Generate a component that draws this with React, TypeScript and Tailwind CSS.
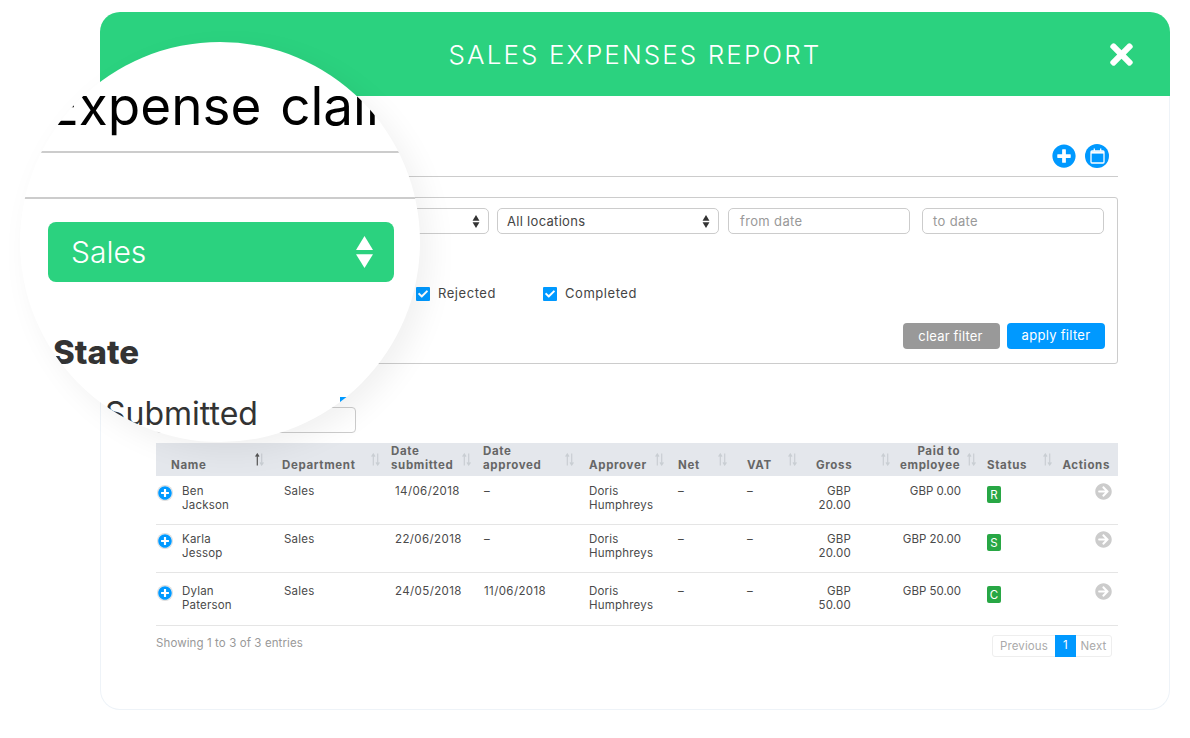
import React from "react";
import { FaTimes, FaPlusCircle, FaArrowCircleRight, FaCheck } from "react-icons/fa";

const font = "font-['Inter','Noto_Sans',sans-serif]";
const cols = "grid grid-cols-[120px_109px_92px_106px_89px_69px_69px_90px_81px_77px_60px]";

function Sort({ active }: { active?: boolean }) {
  return (
    <svg width="9" height="13" viewBox="0 0 9 13" className="shrink-0 mb-[6px]" fill="none" strokeWidth="1.2">
      <path d="M2.3 12.5V1.5M0.6 3.6L2.3 1 4 3.6" stroke={active ? "#555" : "#c9ced3"} />
      <path d="M6.7 0.5V11.5M5 9.4L6.7 12 8.4 9.4" stroke="#c9ced3" />
    </svg>
  );
}

function Updown({ w, h, color }: { w: number; h: number; color: string }) {
  return (
    <svg width={w} height={h} viewBox="0 0 16 30" fill={color} className="shrink-0">
      <path d="M8 0L16 13H0Z" />
      <path d="M8 30L0 17H16Z" />
    </svg>
  );
}

function Check({ label }: { label: string }) {
  return (
    <div className="w-[127px] flex items-center gap-[8px] h-[14px]">
      <span className="w-[14px] h-[14px] rounded-[1px] bg-[#0099ff] flex items-center justify-center text-white">
        <FaCheck size={10} />
      </span>
      <span className="text-[13px] text-[#444] tracking-[0.55px]">{label}</span>
    </div>
  );
}

const heads: { t: React.ReactNode; cls: string; sort?: boolean; active?: boolean; right?: boolean }[] = [
  { t: "Name", cls: "pl-[15px] pr-[12px]", sort: true, active: true },
  { t: "Department", cls: "pl-[6px] pr-[5px]", sort: true },
  { t: <>Date<br />submitted</>, cls: "pl-[6px] pr-[6px]", sort: true },
  { t: <>Date<br />approved</>, cls: "pl-[6px] pr-[9px]", sort: true },
  { t: "Approver", cls: "pl-[6px] pr-[8px]", sort: true },
  { t: "Net", cls: "pl-[6px] pr-[14px]", sort: true },
  { t: "VAT", cls: "pl-[6px] pr-[13px]", sort: true },
  { t: "Gross", cls: "pl-[6px] pr-[10px]", sort: true },
  { t: <>Paid to<br />employee</>, cls: "pl-[0px] pr-[5px]", sort: true, right: true },
  { t: "Status", cls: "pl-[6px] pr-[6px]", sort: true },
  { t: "Actions", cls: "pr-[8px] justify-end" },
];

const rows = [
  { a: "Ben", b: "Jackson", sub: "14/06/2018", app: "–", gross: "20.00", paid: "GBP 0.00", st: "R", h: "h-[49px]", pt: "pt-[8px]" },
  { a: "Karla", b: "Jessop", sub: "22/06/2018", app: "–", gross: "20.00", paid: "GBP 20.00", st: "S", h: "h-[48px]", pt: "pt-[7px]" },
  { a: "Dylan", b: "Paterson", sub: "24/05/2018", app: "11/06/2018", gross: "50.00", paid: "GBP 50.00", st: "C", h: "h-[53px]", pt: "pt-[11px]" },
];

export default function App() {
  return (
    <div className={`${font} relative w-[1190px] h-[738px] bg-white overflow-hidden`}>
      <div className="absolute left-[100px] top-[12px] w-[1070px] h-[698px] flex flex-col">
        <div className="h-[84px] bg-[#2bd27f] rounded-t-[20px] relative flex items-center justify-center shrink-0">
          <span className="text-white text-[26px] tracking-[2.1px] font-[350] pt-[2px] leading-none">SALES EXPENSES REPORT</span>
          <FaTimes size={33} className="text-white absolute right-[32px] top-[26px]" />
        </div>

        <div className="flex-1 pl-[55px] pr-[51px] flex flex-col border border-t-0 border-[#eef3f8] rounded-b-[20px] bg-white">
          <div className="flex justify-end gap-[9px] pt-[48px] pb-[8px] border-b border-[#ccc] pr-[9px]">
            <FaPlusCircle size={24} className="text-[#0099ff]" />
            <span className="w-[24px] h-[24px] rounded-full bg-[#0099ff] flex items-center justify-center">
              <svg width="15" height="16" viewBox="0 0 15 16" fill="none" stroke="white" strokeWidth="1.3">
                <rect x="1" y="3" width="13" height="12" rx="1" />
                <path d="M1 4.5H14" strokeWidth="2.2" />
                <path d="M4.3 0.5V3M10.7 0.5V3" />
              </svg>
            </span>
          </div>

          <div className="mt-[20px] h-[167px] border border-[#ccc] rounded-[3px] pt-[10px] pb-[14px] pl-[5px] pr-[13px] flex flex-col">
            <div className="flex justify-end text-[13px] h-[26px]">
              <div className="w-[222px] border border-[#ccc] rounded-[5px] flex items-center justify-end px-[8px] mr-[8px]">
                <Updown w={8} h={13} color="#333" />
              </div>
              <div className="w-[222px] border border-[#ccc] rounded-[5px] flex items-center justify-between pl-[9px] pr-[8px] mr-[9px] text-[#444]">
                <span className="tracking-[0.3px] pt-[1px]">All locations</span>
                <Updown w={8} h={13} color="#333" />
              </div>
              <div className="w-[182px] border border-[#ccc] rounded-[5px] flex items-center pl-[11px] pt-[1px] text-[#999] mr-[12px] tracking-[0.35px]">from date</div>
              <div className="w-[182px] border border-[#ccc] rounded-[5px] flex items-center pl-[10px] pt-[1px] text-[#999] tracking-[0.35px]">to date</div>
            </div>
            <div className="flex mt-[53px]">
              <Check label="Submitted" />
              <Check label="Approved" />
              <Check label="Rejected" />
              <Check label="Completed" />
            </div>
            <div className="flex justify-end gap-[7px] mt-[22px] -mr-[1px]">
              <button className="w-[97px] h-[26px] rounded-[4px] bg-[#999] text-white text-[13px] tracking-[0.2px] pt-[1px] pr-[2px]">clear filter</button>
              <button className="w-[98px] h-[26px] rounded-[4px] bg-[#0099ff] text-white text-[13px] tracking-[0.3px] pb-[1px]">apply filter</button>
            </div>
          </div>

          <div className="mt-[43px] h-[26px] w-[200px] border border-[#ccc] rounded-[4px] shrink-0" />

          <div className="mt-[10px]">
            <div className={`${cols} h-[33px] bg-[#e4e7ec] text-[11.5px] font-bold text-[#666] leading-[14px] tracking-[0.65px]`}>
              {heads.map((h, i) => (
                <div key={i} className={`flex items-end justify-between pb-[4px] ${h.cls}`}>
                  <span className={h.right ? "flex-1 text-right pr-[7px]" : ""}>{h.t}</span>
                  {h.sort && <Sort active={h.active} />}
                </div>
              ))}
            </div>
            {rows.map((r, i) => (
              <div key={i} className={`${cols} ${r.h} ${r.pt} border-b border-[#e5e5e5] text-[11.5px] leading-[14px] text-[#4a4a4a] tracking-[0.2px]`}>
                <div className="flex pl-[2px] gap-[10px]">
                  <span className="w-[14px] h-[14px] mt-[2px] rounded-full bg-white flex items-center justify-center ring-1 ring-[#ddd] text-[#0099ff] shrink-0">
                    <FaPlusCircle size={14} />
                  </span>
                  <span>{r.a}<br />{r.b}</span>
                </div>
                <div className="pl-[8px]">Sales</div>
                <div className="pl-[10px] tracking-[0.4px]">{r.sub}</div>
                <div className="pl-[7px] tracking-[0.4px]">{r.app}</div>
                <div className="pl-[6px]">Doris<br />Humphreys</div>
                <div className="pl-[6px]">–</div>
                <div className="pl-[6px]">–</div>
                <div className="text-right pr-[49px]">GBP<br />{r.gross}</div>
                <div className="text-right pr-[20px] tracking-[0px]">{r.paid}</div>
                <div className="pl-[6px]">
                  <span className="w-[14px] h-[17px] mt-[2px] bg-[#28a745] rounded-[2px] text-white flex items-center justify-center">{r.st}</span>
                </div>
                <div className="flex justify-end pr-[6px]">
                  <FaArrowCircleRight size={17} className="text-[#ccc] -mt-[1px]" />
                </div>
              </div>
            ))}
          </div>

          <div className="flex justify-between pt-[9px] text-[11.5px] text-[#999] tracking-[0.1px]">
            <span>Showing 1 to 3 of 3 entries</span>
            <div className="flex h-[22px] mr-[6px] border border-[#eee] rounded-[3px] items-center leading-none text-[#aaa]">
              <span className="w-[62px] text-center pt-[1px]">Previous</span>
              <span className="w-[21px] h-[22px] bg-[#0099ff] text-white flex items-center justify-center">1</span>
              <span className="w-[35px] text-center pt-[1px]">Next</span>
            </div>
          </div>
        </div>
      </div>

      <div className="absolute left-[20px] top-[42px] w-[400px] h-[400px] rounded-full bg-white overflow-hidden shadow-[10px_10px_30px_rgba(0,0,0,0.06)]">
        <div className="flex flex-col pt-[32px]">
          <div className="ml-[27px] text-[53px] leading-[64px] text-black whitespace-nowrap font-normal [word-spacing:4px]">Expense claims</div>
          <div className="mt-[13px] ml-[21px] mr-[21px] h-[2px] bg-[#ccc]" />
          <div className="mt-[44px] h-[2px] bg-[#ccc]" />
          <div className="mt-[23px] ml-[28px] w-[346px] h-[60px] rounded-[8px] bg-[#2bd27f] flex items-center justify-between pl-[23px] pr-[21px] text-white text-[30px] font-light shrink-0">
            <span>Sales</span>
            <Updown w={17} h={32} color="white" />
          </div>
          <div className="mt-[52px] ml-[33px] text-[33px] leading-[36px] font-extrabold text-[#333]">State</div>
          <div className="mt-[26px] ml-[85px] flex items-start">
            <span className="w-[235px] shrink-0 text-[32px] leading-[36px] text-[#333]">Submitted</span>
            <span className="w-[30px] h-[30px] shrink-0 mt-[1px] bg-[#0099ff]" />
          </div>
        </div>
      </div>
    </div>
  );
}
